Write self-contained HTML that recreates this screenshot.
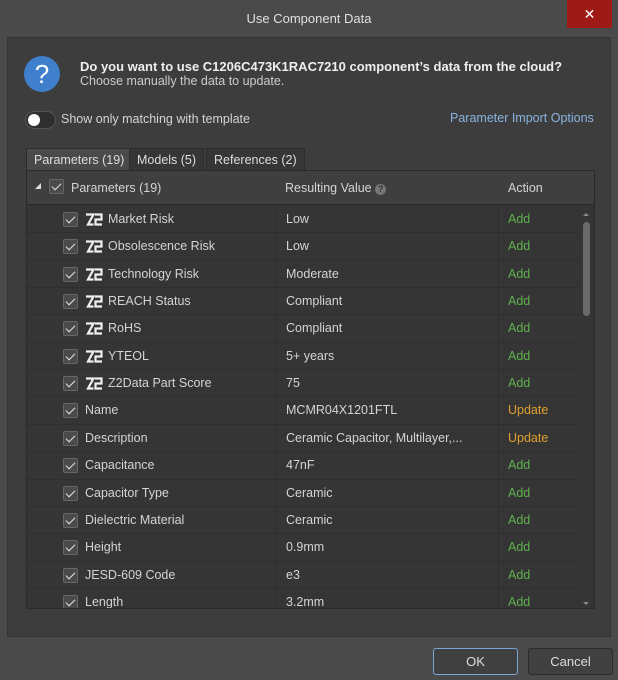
<!DOCTYPE html>
<html><head><style>
*{box-sizing:border-box;margin:0;padding:0}
body{width:618px;height:680px;background:#4a4a4a;font-family:"Liberation Sans",sans-serif;color:#d4d4d4;font-size:12.5px;position:relative;overflow:hidden}
.abs{position:absolute}
.title{left:0;top:0;width:618px;height:37px;text-align:center;line-height:37px;font-size:13px;color:#e0e0e0}
.close{left:567px;top:0;width:45px;height:28px;background:#9e1a16;color:#fff;text-align:center;line-height:28px;font-size:14px}
.panel{left:7px;top:37px;width:604px;height:600px;background:#3d3d3d;border:1px solid #333}
.q{left:24px;top:56px;width:36px;height:36px;border-radius:50%;background:#3f7fcb;color:#fff;font-size:26px;text-align:center;line-height:36px}
.tog{left:25px;top:111px;width:31px;height:18px;border-radius:9px;background:#2f2f2f;border:1px solid #555}
.tog i{position:absolute;left:2px;top:2px;width:12px;height:12px;border-radius:50%;background:#fff}
.tab{top:148px;height:22px;line-height:22px;padding:0 7px;border:1px solid #2c2c2c;border-bottom:none;background:#363636;color:#ddd;font-size:12.5px}
.table{left:26px;top:170px;width:569px;height:439px;background:#353535;border:1px solid #2a2a2a;overflow:hidden}
.hdr{position:absolute;left:0;top:0;width:567px;height:34px;background:#3f3f3f;border-bottom:1px solid #2a2a2a}
.row{position:absolute;left:0;width:553px;height:27.4px;border-bottom:1px solid #2e2e2e;line-height:27px}
.cb{position:absolute;width:15px;height:15px;border:1px solid #666;background:#4a4a4a;border-radius:2px}
.cb:after{content:"";position:absolute;left:4px;top:1px;width:4px;height:8px;border:solid #e6e6e6;border-width:0 1.5px 1.5px 0;transform:rotate(45deg)}
.c2{position:absolute;left:249px;top:0;height:100%;border-left:1px solid #2e2e2e;padding-left:9px}
.c3{position:absolute;left:471px;top:0;height:100%;border-left:1px solid #2e2e2e;padding-left:9px;color:#5fb14e}
.up{color:#e0a030}
.z{position:absolute;left:58px;top:7px}
.btn{top:648px;height:27px;border:1px solid #2c2c2c;border-radius:3px;background:#404040;text-align:center;line-height:25px;color:#ddd;font-size:13px}
</style></head><body>
<div class="abs title">Use Component Data</div>
<div class="abs close">✕</div>
<div class="abs panel"></div>
<div class="abs q">?</div>
<div class="abs" style="left:80px;top:59px;font-size:13px;font-weight:bold;color:#eee">Do you want to use C1206C473K1RAC7210 component’s data from the cloud?</div>
<div class="abs" style="left:80px;top:74px;font-size:12.5px;color:#ccc">Choose manually the data to update.</div>
<div class="abs tog"><i></i></div>
<div class="abs" style="left:61px;top:112px">Show only matching with template</div>
<div class="abs" style="left:450px;top:111px;color:#8ab4e0">Parameter Import Options</div>
<div class="abs tab" style="left:26px;background:#4a4a4a">Parameters (19)</div>
<div class="abs tab" style="left:129px">Models (5)</div>
<div class="abs tab" style="left:206px">References (2)</div>
<div class="abs table">
<div class="hdr">
<div class="abs" style="left:8px;top:12px;width:0;height:0;border-left:6px solid transparent;border-bottom:6px solid #ddd"></div>
<div class="cb" style="left:22px;top:8px"></div>
<div class="abs" style="left:44px;top:10px">Parameters (19)</div>
<div class="abs" style="left:258px;top:10px">Resulting Value <span style="display:inline-block;width:11px;height:11px;border-radius:50%;background:#777;color:#333;font-size:9px;text-align:center;line-height:11px;font-weight:bold">?</span></div>
<div class="abs" style="left:481px;top:10px">Action</div>
</div>
<div id="rows"></div>
<div class="abs" style="left:553px;top:35px;width:14px;height:404px;background:#353535"></div>
<div class="abs" style="left:556px;top:51px;width:7px;height:94px;border-radius:4px;background:#6a6a6a"></div>
<div class="abs" style="left:556px;top:39px;width:0;height:0;border:3px solid transparent;border-bottom:3px solid #888"></div>
<div class="abs" style="left:556px;top:431px;width:0;height:0;border:3px solid transparent;border-top:3px solid #888"></div>
</div>
<div class="abs btn" style="left:433px;width:85px;border-color:#7aa6d6">OK</div>
<div class="abs btn" style="left:528px;width:85px">Cancel</div>
<script>
var Z='<svg class="z" width="18" height="13" viewBox="0 0 18 13"><path d="M1 1.5H8.5L3 11.5H8.5M10 1.5H16.5V6.5H10.5V11.5H17" fill="none" stroke="#f0f0f0" stroke-width="2.2"/></svg>';
var d=[["Market Risk","Low",1,0],["Obsolescence Risk","Low",1,0],["Technology Risk","Moderate",1,0],["REACH Status","Compliant",1,0],["RoHS","Compliant",1,0],["YTEOL","5+ years",1,0],["Z2Data Part Score","75",1,0],["Name","MCMR04X1201FTL",0,1],["Description","Ceramic Capacitor, Multilayer,...",0,1],["Capacitance","47nF",0,0],["Capacitor Type","Ceramic",0,0],["Dielectric Material","Ceramic",0,0],["Height","0.9mm",0,0],["JESD-609 Code","e3",0,0],["Length","3.2mm",0,0]];
var h="";d.forEach(function(r,i){var t=35+i*27.35;
h+='<div class="row" style="top:'+t+'px"><div class="cb" style="left:36px;top:6px"></div>'+(r[2]?Z:'')+'<div class="abs" style="left:'+(r[2]?81:58)+'px;top:0">'+r[0]+'</div><div class="c2">'+r[1]+'</div><div class="c3'+(r[3]?' up':'')+'">'+(r[3]?'Update':'Add')+'</div></div>';});
document.getElementById("rows").innerHTML=h;
</script>
</body></html>
